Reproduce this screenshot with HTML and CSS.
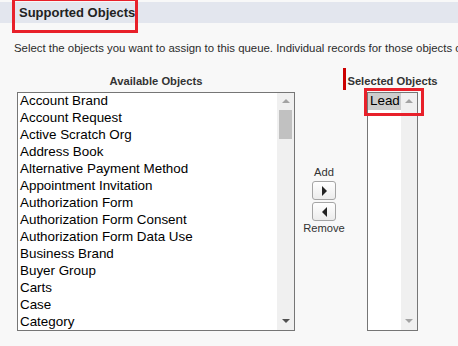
FILE: index.html
```html
<!DOCTYPE html>
<html lang="en">
<head>
    <meta charset="UTF-8">
    <title>Supported Objects</title>
    <link rel="stylesheet" href="styles.css">
</head>
<body>
    <div class="section-head">
        <h2>Supported Objects</h2>
        <span class="callout callout-head"></span>
    </div>

    <p class="hint">Select the objects you want to assign to this queue. Individual records for those objects can be shared with queue members.</p>

    <div class="picker">
        <!-- Available list -->
        <div class="col col-avail">
            <div class="col-label">Available Objects</div>
            <div class="listbox listbox-avail">
                <ul class="options">
                    <li>Account Brand</li>
                    <li>Account Request</li>
                    <li>Active Scratch Org</li>
                    <li>Address Book</li>
                    <li>Alternative Payment Method</li>
                    <li>Appointment Invitation</li>
                    <li>Authorization Form</li>
                    <li>Authorization Form Consent</li>
                    <li>Authorization Form Data Use</li>
                    <li>Business Brand</li>
                    <li>Buyer Group</li>
                    <li>Carts</li>
                    <li>Case</li>
                    <li>Category</li>
                </ul>
                <div class="scrollbar">
                    <span class="arrow arrow-up off"></span>
                    <span class="thumb"></span>
                    <span class="arrow arrow-down"></span>
                </div>
            </div>
        </div>

        <!-- Add / Remove -->
        <div class="col col-buttons">
            <div class="btn-label">Add</div>
            <button class="move-btn" title="Add"><span class="tri tri-right"></span></button>
            <button class="move-btn" title="Remove"><span class="tri tri-left"></span></button>
            <div class="btn-label">Remove</div>
        </div>

        <!-- Selected list -->
        <div class="col col-selected">
            <div class="col-label required">Selected Objects</div>
            <div class="listbox listbox-selected">
                <ul class="options">
                    <li class="picked">Lead</li>
                </ul>
                <div class="scrollbar">
                    <span class="arrow arrow-up off"></span>
                    <span class="arrow arrow-down off"></span>
                </div>
                <span class="callout callout-lead"></span>
            </div>
        </div>
    </div>
</body>
</html>
```

FILE: styles.css
```css
body {
    margin: 0;
    padding: 0;
    background: #f8f8f8;
    font-family: "Liberation Sans", Arial, sans-serif;
    color: #333;
    overflow: hidden;
}

.section-head {
    position: relative;
    margin-top: 2px;
    height: 21px;
    background: #e3e6ee;
}
.section-head h2 {
    margin: 0;
    padding-left: 19px;
    font-size: 13px;
    line-height: 21px;
    font-weight: bold;
    color: #222;
}

/* red annotation boxes drawn over the screenshot */
.callout {
    position: absolute;
    border: 3px solid #e8202a;
    box-sizing: border-box;
}
.callout-head {
    left: 12px;
    top: -4px;
    width: 126px;
    height: 35px;
}
.callout-lead {
    left: -4px;
    top: -5px;
    width: 60px;
    height: 28px;
}

.hint {
    margin: 18px 0 0 14px;
    font-size: 11.4px;
    line-height: 14px;
    white-space: nowrap;
    overflow: hidden;
    color: #2b2b2b;
}

.picker {
    display: flex;
    margin-top: 19px;
    padding-left: 17px;
}
.col {
    display: flex;
    flex-direction: column;
    align-items: center;
}
.col-label {
    font-size: 11.2px;
    line-height: 14px;
    font-weight: bold;
    margin-bottom: 4px;
    white-space: nowrap;
}
.col-label.required {
    position: relative;
}
.col-label.required::before {
    content: "";
    position: absolute;
    left: -4px;
    top: -6px;
    width: 3px;
    height: 22px;
    background: #cc0000;
}

.col-avail { width: 278px; }
.col-buttons {
    width: 58px;
    padding-top: 91px;
}
.col-selected {
    width: 51px;
    margin-left: 14px;
}

.listbox {
    position: relative;
    display: flex;
    height: 239px;
    background: white;
    border: 1px solid #767676;
    box-sizing: border-box;
}
.listbox-avail { width: 278px; }
.listbox-selected { width: 51px; }

.options {
    flex: 1;
    margin: 0;
    padding: 0;
    list-style: none;
    overflow: hidden;
}
.options li {
    height: 17px;
    line-height: 16px;
    padding-left: 2px;
    font-size: 13.4px;
    color: #000;
    white-space: nowrap;
}
.options li.picked {
    background: #cdcdcd;
}

.scrollbar {
    position: relative;
    width: 17px;
    background: #f0f0f0;
}
.listbox-selected .scrollbar { width: 16px; }

.arrow {
    position: absolute;
    left: 5px;
    width: 0;
    height: 0;
    border-left: 4px solid transparent;
    border-right: 4px solid transparent;
}
.listbox-selected .arrow { left: 4px; }
.arrow-up {
    top: 6px;
    border-bottom: 4px solid #505050;
}
.arrow-down {
    bottom: 7px;
    border-top: 4px solid #505050;
}
.arrow-up.off { border-bottom-color: #a3a3a3; }
.arrow-down.off { border-top-color: #a3a3a3; }
.thumb {
    position: absolute;
    left: 2px;
    right: 2px;
    top: 17px;
    height: 29px;
    background: #c1c1c1;
}

.btn-label {
    font-size: 11.2px;
    line-height: 14px;
}
.move-btn {
    display: flex;
    align-items: center;
    justify-content: center;
    width: 24px;
    height: 19px;
    margin-top: 2px;
    padding: 0;
    border: 1px solid #a5a5a5;
    border-radius: 3px;
    background: linear-gradient(#ffffff, #ececec);
}
.tri {
    width: 0;
    height: 0;
    border-top: 5px solid transparent;
    border-bottom: 5px solid transparent;
}
.tri-right { border-left: 5px solid #222; margin-left: 1px; }
.tri-left { border-right: 5px solid #222; }
```
